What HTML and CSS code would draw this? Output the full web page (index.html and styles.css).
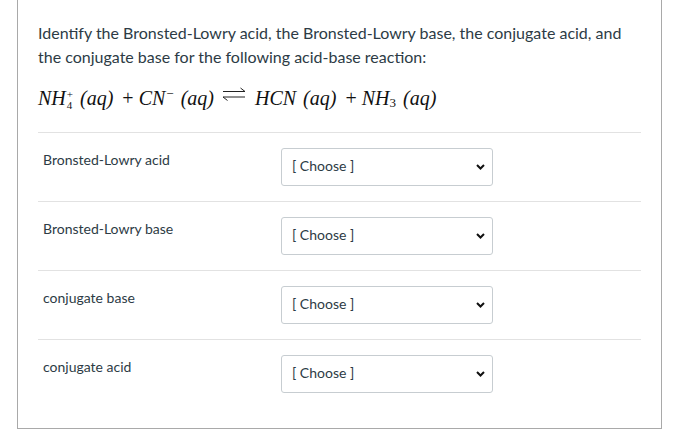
FILE: index.html
```
<!DOCTYPE html>
<html lang="en">
<head>
<meta charset="utf-8">
<title>Acid-base question</title>
<link rel="stylesheet" href="styles.css">
</head>
<body>
<div class="box">
  <p class="question">Identify the Bronsted-Lowry acid, the Bronsted-Lowry base, the conjugate acid, and the conjugate base for the following acid-base reaction:</p>
  <div class="eq">
    <span class="sp">NH<span class="subsup"><span class="sup">+</span><span class="sub">4</span></span></span>
    <span class="aq">(aq)</span>
    <span class="op">+</span>
    <span class="sp">CN<span class="supm">&minus;</span></span>
    <span class="aq">(aq)</span>
    <svg class="arrow" width="24" height="14" viewBox="0 0 24 14" aria-hidden="true"><path d="M1 4.5H23M23 4.5L18.5 1M1 10H23M1 10L5.5 13.5" fill="none" stroke="#222" stroke-width="1"/></svg>
    <span class="sp">HCN</span>
    <span class="aq">(aq)</span>
    <span class="op">+</span>
    <span class="sp">NH<span class="sub3">3</span></span>
    <span class="aq">(aq)</span>
  </div>
  <div class="row">
    <div class="label">Bronsted-Lowry acid</div>
    <div class="select"><span>[ Choose ]</span><svg width="9" height="6" viewBox="0 0 9 6"><path d="M1 1L4.5 4.5L8 1" fill="none" stroke="#111" stroke-width="2"/></svg></div>
  </div>
  <div class="row">
    <div class="label">Bronsted-Lowry base</div>
    <div class="select"><span>[ Choose ]</span><svg width="9" height="6" viewBox="0 0 9 6"><path d="M1 1L4.5 4.5L8 1" fill="none" stroke="#111" stroke-width="2"/></svg></div>
  </div>
  <div class="row">
    <div class="label">conjugate base</div>
    <div class="select"><span>[ Choose ]</span><svg width="9" height="6" viewBox="0 0 9 6"><path d="M1 1L4.5 4.5L8 1" fill="none" stroke="#111" stroke-width="2"/></svg></div>
  </div>
  <div class="row">
    <div class="label">conjugate acid</div>
    <div class="select"><span>[ Choose ]</span><svg width="9" height="6" viewBox="0 0 9 6"><path d="M1 1L4.5 4.5L8 1" fill="none" stroke="#111" stroke-width="2"/></svg></div>
  </div>
</div>
</body>
</html>
```
FILE: styles.css
```
html, body {
  margin: 0;
  padding: 0;
  background: #fff;
}
body {
  font-family: Lato, "Liberation Sans", sans-serif;
  color: #2d3b45;
}
.box {
  margin-left: 17px;
  width: 603px;
  border: 1px solid #a9a9a9;
  border-top: 0;
  padding: 21px 20px 20px;
}
.question {
  margin: 0;
  font-size: 16px;
  line-height: 24px;
}
.eq {
  margin: 10px 0 23px;
  font-family: "Liberation Serif", "DejaVu Serif", serif;
  font-style: italic;
  font-size: 20px;
  line-height: 30px;
  height: 30px;
  color: #111;
  white-space: nowrap;
  display: flex;
  align-items: baseline;
}
.eq .sp { margin-right: 7px; }
.eq .op { font-style: normal; margin: 0 5px 0 9px; }
.subsup {
  display: inline-block;
  font-style: normal;
  font-size: 11px;
  line-height: 11px;
  vertical-align: -4px;
  margin-left: 1px;
}
.subsup .sup, .subsup .sub { display: block; }
.supm {
  font-style: normal;
  font-size: 13px;
  vertical-align: 7px;
  margin-left: 1px;
}
.sub3 {
  font-style: normal;
  font-size: 13px;
  vertical-align: -2px;
}
.arrow {
  align-self: center;
  margin: 0 9px 0 8px;
}
.row {
  display: grid;
  grid-template-columns: 243px 212px;
  border-top: 1px solid #e2e2e2;
  padding: 15px 0;
}
.label {
  padding: 2px 0 0 5px;
  font-size: 14px;
  line-height: 20px;
}
.select {
  box-sizing: border-box;
  height: 38px;
  border: 1px solid #c7cdd1;
  border-radius: 3px;
  display: flex;
  align-items: center;
  justify-content: space-between;
  padding: 0 7px 3px 10px;
  font-size: 14px;
  color: #2d3b45;
}
.select svg { margin-top: 3px; }
```
